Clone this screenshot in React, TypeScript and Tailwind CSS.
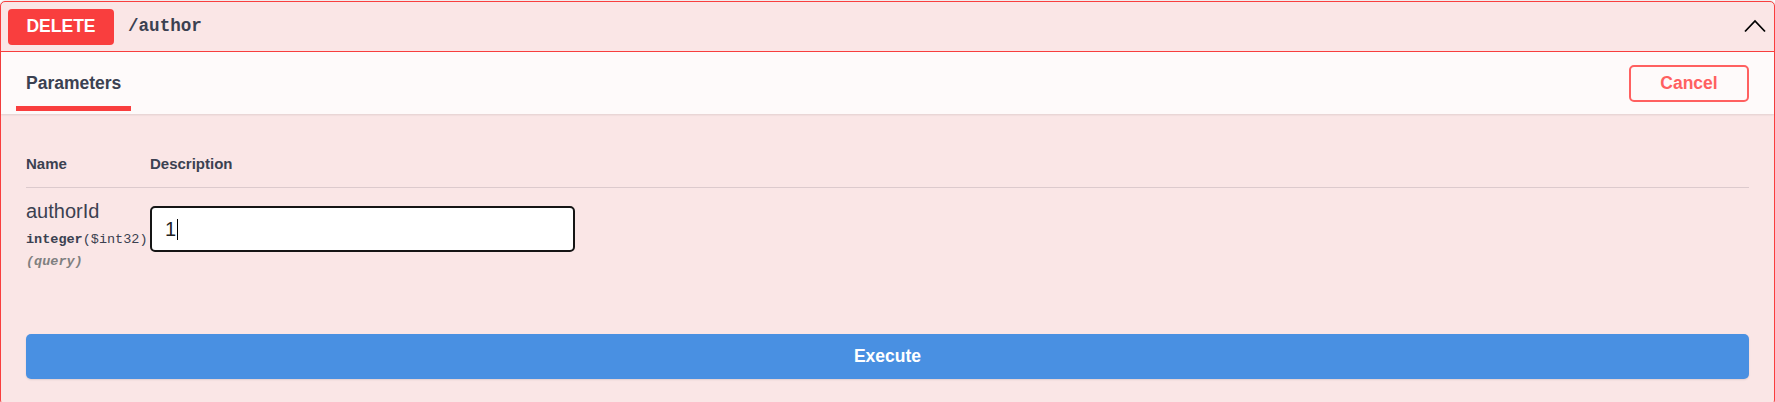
import { useState } from "react"

const sans = "font-['Liberation_Sans',Arial,sans-serif]"
const mono = "font-['Liberation_Mono','DejaVu_Sans_Mono',monospace]"

export default function App() {
    const [authorId] = useState("1")

    return (
        <div className={`h-[402px] overflow-hidden bg-white pt-px ${sans}`}>
            <div className="rounded-[5px] border border-[#f93e3e] bg-[#fae6e6] shadow-[0_0_3px_rgba(0,0,0,0.19)]">
                {/* summary */}
                <div className="flex h-[50px] items-center border-b border-[#f93e3e] pl-[7px] pr-[7px]">
                    <span className="flex h-[36px] w-[106px] items-center justify-center rounded-[4px] bg-[#f93e3e] text-[17.5px] font-bold text-white">
                        DELETE
                    </span>
                    <span className={`ml-[14px] text-[17.6px] font-bold text-[#3b4151] ${mono}`}>/author</span>
                    <div className="flex-1" />
                    <svg width="24" height="14" viewBox="0 0 24 14" className="mb-[1px]">
                        <polyline points="2,12.5 12,2 22,12.5" fill="none" stroke="#000" strokeWidth="1.8" />
                    </svg>
                </div>

                {/* section header */}
                <div className="flex h-[62px] items-center bg-[#fefafa] px-[25px] shadow-[0_1px_2px_rgba(0,0,0,0.1)]">
                    <div className="relative flex h-full items-center">
                        <span className="text-[17.5px] font-bold text-[#3b4151]">Parameters</span>
                        <span className="absolute bottom-[3px] left-[-10px] right-[-10px] h-[5px] bg-[#f93e3e]" />
                    </div>
                    <div className="flex-1" />
                    <button className="h-[37px] w-[120px] rounded-[5px] border-2 border-[#ff6060] bg-transparent text-[17.5px] font-bold text-[#ff6060]">
                        Cancel
                    </button>
                </div>

                {/* parameters table */}
                <div className="px-[25px] pt-[41px]">
                    <div className="flex border-b border-[#dccacd] pb-[15px] text-[15px] leading-[17px] font-bold text-[#3b4151]">
                        <div className="w-[124px]">Name</div>
                        <div>Description</div>
                    </div>
                    <div className="flex h-[82px]">
                        <div className="w-[124px] pt-[12px] text-[#3b4151]">
                            <div className="text-[20px] leading-[23px]">authorId</div>
                            <div className={`mt-[8px] whitespace-nowrap text-[13.5px] leading-[17px] font-bold ${mono}`}>
                                integer<span className="font-normal">($int32)</span>
                            </div>
                            <div className={`mt-[5px] text-[13.5px] leading-[17px] font-bold italic text-[#808080] ${mono}`}>
                                (query)
                            </div>
                        </div>
                        <div className="pt-[18px]">
                            <div className="flex h-[46px] w-[425px] items-center rounded-[5px] border-2 border-[#151515] bg-white pl-[13px] text-[20px] text-[#222]">
                                {authorId}
                                <span className="ml-[1px] h-[21px] w-px bg-black" />
                            </div>
                        </div>
                    </div>
                </div>

                {/* execute */}
                <div className="px-[25px] pt-[64px] pb-[25px]">
                    <button className="h-[45px] w-full rounded-[5px] bg-[#4990e2] text-[17.5px] font-bold text-white shadow-[0_1px_2px_rgba(0,0,0,0.1)]">
                        Execute
                    </button>
                </div>
            </div>
        </div>
    )
}
